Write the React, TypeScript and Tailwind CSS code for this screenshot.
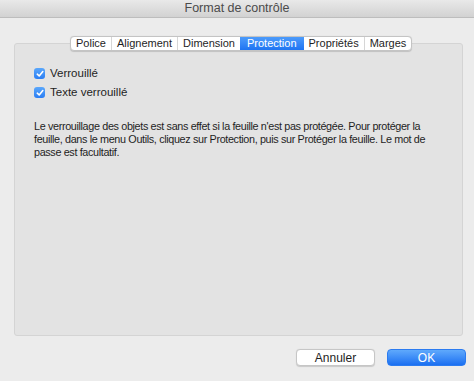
const tabs = ["Police", "Alignement", "Dimension", "Protection", "Propriétés", "Marges"];

function Check({ label }: { label: string }) {
  return (
    <label className="flex items-center gap-[5px] h-[13px]">
      <span className="w-[11px] h-[11px] rounded-[3px] bg-gradient-to-b from-[#5aa7fb] to-[#2a7df3] flex items-center justify-center">
        <svg width="8" height="8" viewBox="0 0 8 8">
          <path d="M1.3 4.2 L3.2 6 L6.8 1.6" fill="none" stroke="white" strokeWidth="1.6" strokeLinecap="round" strokeLinejoin="round" />
        </svg>
      </span>
      <span className="text-[11.5px] text-[#1e1e1e]">{label}</span>
    </label>
  );
}

export default function App() {
  return (
    <div
      className="w-[474px] h-[381px] bg-[#ececec] flex flex-col overflow-hidden"
      style={{ fontFamily: '"Liberation Sans", Arial, sans-serif' }}
    >
      <div className="h-[18px] bg-gradient-to-b from-[#e9e9e9] to-[#d2d2d2] border-b border-[#bdbdbd] flex items-center justify-center">
        <span className="text-[12.5px] text-[#4b4b4b]">Format de contrôle</span>
      </div>

      <div className="flex-1 flex flex-col pl-[14px] pr-[11px] pt-[18px]">
        <div className="relative">
          <div className="absolute left-0 right-0 top-[7px] bottom-0 bg-[#e3e3e3] border border-[#d4d4d4] rounded-[3px]" />
          <div className="relative flex pl-[56px]">
            <div className="flex h-[15px] rounded-[4px] border border-[#c4c4c4] bg-white shadow-[0_0.5px_1px_rgba(0,0,0,0.15)] overflow-hidden text-[11px] text-[#1e1e1e]">
              {tabs.map((t, i) => (
                <div
                  key={t}
                  className={
                    t === "Protection"
                      ? "px-[7px] flex items-center bg-gradient-to-b from-[#4c9bfb] to-[#1e74f2] text-white"
                      : i > 0 && tabs[i - 1] !== "Protection"
                      ? "px-[5px] flex items-center border-l border-[#d6d6d6]"
                      : "px-[5px] flex items-center"
                  }
                >
                  {t}
                </div>
              ))}
            </div>
          </div>
          <div className="relative flex flex-col pl-[20px] pt-[16px] h-[285px]">
            <div className="flex flex-col gap-[6px]">
              <Check label="Verrouillé" />
              <Check label="Texte verrouillé" />
            </div>
            <p className="mt-[21px] text-[10.8px] leading-[13px] tracking-[-0.35px] text-[#1e1e1e] whitespace-nowrap">
              Le verrouillage des objets est sans effet si la feuille n'est pas protégée. Pour protéger la
              <br />
              feuille, dans le menu Outils, cliquez sur Protection, puis sur Protéger la feuille. Le mot de
              <br />
              passe est facultatif.
            </p>
          </div>
        </div>

        <div className="flex justify-end gap-[12px] mt-[13px] mr-[-3px]">
          <button className="w-[79px] h-[17px] rounded-[4px] bg-white border border-[#c6c6c6] shadow-[0_0.5px_1px_rgba(0,0,0,0.15)] text-[12px] text-[#1e1e1e] flex items-center justify-center">
            Annuler
          </button>
          <button className="w-[79px] h-[17px] rounded-[4px] bg-gradient-to-b from-[#5fa9fc] to-[#1a6ff1] border border-[#2b7bf0] text-[12px] text-white flex items-center justify-center">
            OK
          </button>
        </div>
      </div>
    </div>
  );
}
